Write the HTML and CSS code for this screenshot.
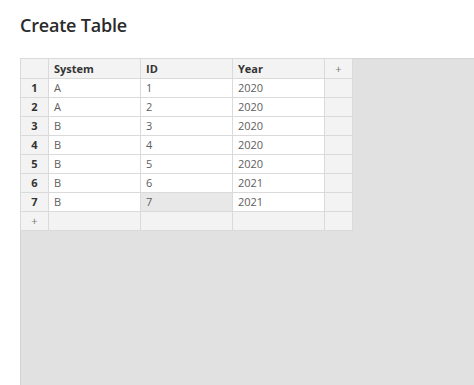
FILE: index.html
```html
<!DOCTYPE html>
<html lang="en">
<head>
    <meta charset="UTF-8">
    <meta name="viewport" content="width=device-width, initial-scale=1.0">
    <title>Create Table</title>
    <link rel="stylesheet" href="styles.css">
</head>
<body>
    <h1 class="title">Create Table</h1>

    <div class="grid-area">
        <table class="sheet">
            <thead>
                <tr>
                    <th class="corner"></th>
                    <th class="col">System</th>
                    <th class="col">ID</th>
                    <th class="col">Year</th>
                    <th class="add">+</th>
                </tr>
            </thead>
            <tbody>
                <tr><th class="rownum">1</th><td>A</td><td>1</td><td>2020</td><td class="pad"></td></tr>
                <tr><th class="rownum">2</th><td>A</td><td>2</td><td>2020</td><td class="pad"></td></tr>
                <tr><th class="rownum">3</th><td>B</td><td>3</td><td>2020</td><td class="pad"></td></tr>
                <tr><th class="rownum">4</th><td>B</td><td>4</td><td>2020</td><td class="pad"></td></tr>
                <tr><th class="rownum">5</th><td>B</td><td>5</td><td>2020</td><td class="pad"></td></tr>
                <tr><th class="rownum">6</th><td>B</td><td>6</td><td>2021</td><td class="pad"></td></tr>
                <tr><th class="rownum">7</th><td>B</td><td class="selected">7</td><td>2021</td><td class="pad"></td></tr>
                <tr class="new-row"><th class="add">+</th><td></td><td></td><td></td><td class="pad"></td></tr>
            </tbody>
        </table>
    </div>
</body>
</html>
```

FILE: styles.css
```css
body {
    margin: 0;
    background: #ffffff;
    font-family: "Open Sans", "Noto Sans", sans-serif;
    color: #333;
    overflow: hidden;
}
.title {
    margin: 0;
    padding: 10px 0 0 20px;
    height: 58px;
    box-sizing: border-box;
    font-size: 18px;
    font-weight: 600;
    letter-spacing: -0.2px;
    color: #2a2a2a;
    line-height: 30px;
}
.grid-area {
    margin-left: 20px;
    height: 327px;
    background: #e1e1e1;
    box-shadow: inset 1px 1px 0 #d4d4d4;
}
.sheet {
    border-collapse: collapse;
    font-size: 11px;
    table-layout: fixed;
}
.sheet th,
.sheet td {
    border: 1px solid #dadada;
    height: 18px;
    padding: 0 5px;
    text-align: left;
    white-space: nowrap;
    line-height: 18px;
}
.sheet td {
    background: #ffffff;
    color: #5e5e5e;
}
.sheet thead th {
    background: #f3f3f3;
    height: 19px;
}
.sheet th.col {
    width: 81px;
    font-weight: 700;
    color: #333;
}
.sheet th.corner,
.sheet th.rownum {
    width: 17px;
    background: #f3f3f3;
    text-align: center;
    font-weight: 700;
    color: #333;
}
.sheet th.add {
    width: 17px;
    background: #f3f3f3;
    text-align: center;
    font-weight: 400;
    color: #777;
}
.sheet td.pad {
    background: #f3f3f3;
}
.sheet td.selected {
    background: #e8e8e8;
}
.new-row td {
    background: #f3f3f3;
}
```
